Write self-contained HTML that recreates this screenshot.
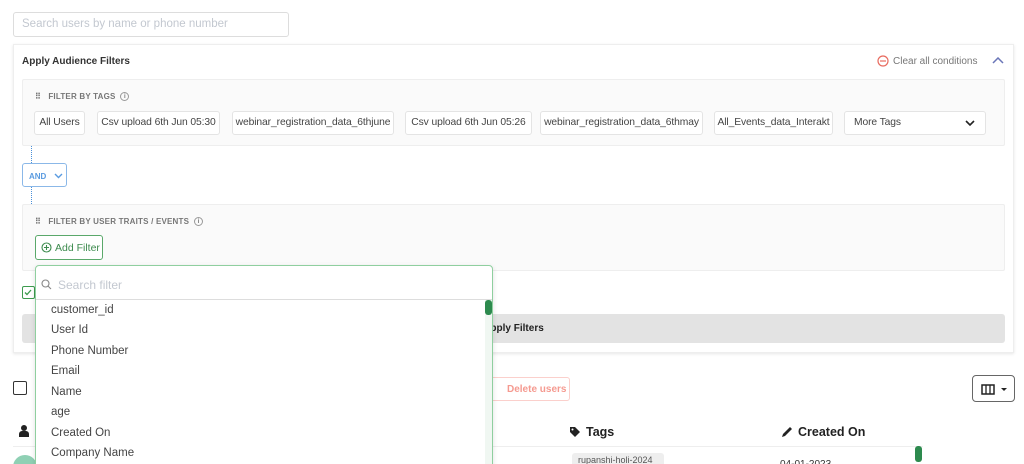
<!DOCTYPE html>
<html><head><meta charset="utf-8"><style>
*{box-sizing:border-box;margin:0;padding:0}
html,body{width:1024px;height:464px;overflow:hidden}
body{background:#fff;font-family:"Liberation Sans",sans-serif;position:relative;color:#333}
.a{position:absolute}
.chip{position:absolute;top:111px;height:24px;border:1px solid #e4e4e4;border-radius:3px;background:#fff;font-size:10.3px;color:#444;line-height:22px;text-align:center;white-space:nowrap;overflow:hidden;letter-spacing:-0.1px}
.lbl{font-size:8px;font-weight:bold;color:#777;letter-spacing:.2px}
.it{position:absolute;left:51px;font-size:11.5px;color:#444}
</style></head><body>
<div class="a" style="left:13px;top:12px;width:276px;height:25px;border:1px solid #ddd;border-radius:3px;font-size:11.5px;color:#c3c8d0;padding:5px 8px">Search users by name or phone number</div>
<div class="a" style="left:13px;top:44px;width:1001px;height:309px;border:1px solid #eee;box-shadow:0 1px 3px rgba(0,0,0,.1);background:#fff"></div>
<div class="a" style="left:22px;top:56px;font-size:10px;font-weight:bold;color:#333">Apply Audience Filters</div>
<svg class="a" style="left:877px;top:55px" width="12" height="12"><circle cx="6" cy="6" r="5" fill="none" stroke="#e86b5f" stroke-width="1.2"/><line x1="3" y1="6" x2="9" y2="6" stroke="#e86b5f" stroke-width="1.2"/></svg>
<div class="a" style="left:893px;top:56px;font-size:10px;color:#777">Clear all conditions</div>
<svg class="a" style="left:992px;top:57px" width="12" height="8"><path d="M1 6L6 1L11 6" fill="none" stroke="#6a76b8" stroke-width="1.5"/></svg>
<div class="a" style="left:22px;top:79px;width:983px;height:67px;border:1px solid #eee;background:#fafafa;border-radius:2px"></div>
<div class="a lbl" style="left:35px;top:92px">⠿&nbsp;&nbsp;&nbsp;FILTER BY TAGS&nbsp;&nbsp;<span style="display:inline-block;width:9px;height:9px;border:1px solid #999;border-radius:50%;font-size:6px;text-align:center;line-height:8px;vertical-align:middle">i</span></div>
<div class="chip" style="left:34px;width:51px">All Users</div>
<div class="chip" style="left:97px;width:123px">Csv upload 6th Jun 05:30</div>
<div class="chip" style="left:232px;width:162px">webinar_registration_data_6thjune</div>
<div class="chip" style="left:405px;width:127px">Csv upload 6th Jun 05:26</div>
<div class="chip" style="left:540px;width:163px">webinar_registration_data_6thmay</div>
<div class="chip" style="left:714px;width:119px">All_Events_data_Interakt</div>
<div class="chip" style="left:844px;width:142px;padding-left:9px;text-align:left">More Tags<svg style="position:absolute;right:10px;top:8px" width="10" height="7"><path d="M1 1L5 5L9 1" fill="none" stroke="#222" stroke-width="1.6"/></svg></div>
<div class="a" style="left:31px;top:146px;height:17px;border-left:1px dotted #4a90d9"></div>
<div class="a" style="left:22px;top:163px;width:45px;height:24px;border:1px solid #8bb8e8;border-radius:3px;font-size:8px;font-weight:bold;color:#5a9be0;padding:8px 0 0 6px">AND<svg style="position:absolute;left:31px;top:9px" width="9" height="6"><path d="M1 1L4.5 4.5L8 1" fill="none" stroke="#5a9be0" stroke-width="1.4"/></svg></div>
<div class="a" style="left:31px;top:187px;height:17px;border-left:1px dotted #4a90d9"></div>
<div class="a" style="left:22px;top:204px;width:983px;height:67px;border:1px solid #eee;background:#fafafa;border-radius:2px"></div>
<div class="a lbl" style="left:35px;top:217px">⠿&nbsp;&nbsp;&nbsp;FILTER BY USER TRAITS / EVENTS&nbsp;&nbsp;<span style="display:inline-block;width:9px;height:9px;border:1px solid #999;border-radius:50%;font-size:6px;text-align:center;line-height:8px;vertical-align:middle">i</span></div>
<div class="a" style="left:35px;top:235px;width:68px;height:25px;border:1px solid #5aa86a;border-radius:3px;background:#fff;font-size:10.5px;color:#3d8b4e;padding:6px 0 0 19px">Add Filter<svg style="position:absolute;left:5px;top:6px" width="11" height="11"><circle cx="5.5" cy="5.5" r="4.5" fill="none" stroke="#3d8b4e" stroke-width="1.1"/><path d="M5.5 3v5M3 5.5h5" stroke="#3d8b4e" stroke-width="1.1"/></svg></div>
<div class="a" style="left:22px;top:286px;width:13px;height:13px;border:1.5px solid #3d9b4e;border-radius:2px"><svg style="position:absolute;left:1px;top:2px" width="8" height="7"><path d="M1 3.5L3 5.5L7 1" fill="none" stroke="#3d9b4e" stroke-width="1.3"/></svg></div>
<div class="a" style="left:22px;top:314px;width:983px;height:29px;background:#e3e3e3;border-radius:3px;font-size:10px;font-weight:bold;color:#222;text-align:center;line-height:29px">Apply Filters</div>
<div class="a" style="left:13px;top:381px;width:14px;height:14px;border:1.5px solid #333;border-radius:2px"></div>
<div class="a" style="left:485px;top:377px;width:85px;height:24px;border:1px solid #fbd0cc;border-radius:3px;font-size:10px;font-weight:bold;color:#f59a90;padding:6px 0 0 21px">Delete users</div>
<div class="a" style="left:972px;top:375px;width:43px;height:27px;border:1px solid #666;border-radius:4px"><svg style="position:absolute;left:8px;top:8px" width="28" height="11"><rect x="1" y="1" width="12" height="9" fill="none" stroke="#222" stroke-width="1.5"/><path d="M5 1v9M9 1v9" stroke="#222" stroke-width="1.3"/><path d="M20 4h6l-3 3z" fill="#222"/></svg></div>
<svg class="a" style="left:19px;top:425px" width="10" height="12"><circle cx="5" cy="3" r="3" fill="#222"/><path d="M0 12v-3a3 3 0 0 1 3-3h4a3 3 0 0 1 3 3v3z" fill="#222"/></svg>
<svg class="a" style="left:569px;top:426px" width="12" height="11"><path d="M1 1h5l5 5-5 5-5-5z" fill="#222"/><circle cx="3.5" cy="3.5" r="1" fill="#fff"/></svg>
<div class="a" style="left:586px;top:425px;font-size:12.5px;font-weight:bold;color:#222">Tags</div>
<svg class="a" style="left:781px;top:426px" width="12" height="12"><path d="M1 11l1-3 7-7 2 2-7 7z" fill="#222"/></svg>
<div class="a" style="left:798px;top:425px;font-size:12.5px;font-weight:bold;color:#222">Created On</div>
<div class="a" style="left:13px;top:446px;width:910px;border-top:1px solid #eee"></div>
<div class="a" style="left:572px;top:453px;width:92px;height:14px;background:#eee;border-radius:3px;font-size:9px;color:#555;padding:2px 0 0 6px">rupanshi-holi-2024</div>
<div class="a" style="left:780px;top:459px;font-size:10px;color:#333">04-01-2023</div>
<div class="a" style="left:915px;top:446px;width:7px;height:16px;background:#2d8a4e;border-radius:3px"></div>
<div class="a" style="left:13px;top:455px;width:24px;height:24px;border-radius:50%;background:#8fd0b4"></div>
<div class="a" style="left:35px;top:265px;width:458px;height:210px;border:1px solid #8fcf9f;border-radius:4px;background:#fff;box-shadow:0 2px 6px rgba(0,0,0,.12)"></div>
<svg class="a" style="left:41px;top:279px" width="11" height="11"><circle cx="4.5" cy="4.5" r="3.5" fill="none" stroke="#888" stroke-width="1.1"/><path d="M7 7l3 3" stroke="#888" stroke-width="1.1"/></svg>
<div class="a" style="left:58px;top:278px;font-size:12px;color:#c3c8d0">Search filter</div>
<div class="a" style="left:36px;top:299px;width:456px;border-top:1px solid #ddd"></div>
<div class="a" style="left:485px;top:300px;width:7px;height:164px;background:#f0f7f2"></div>
<div class="a" style="left:485px;top:300px;width:7px;height:15px;background:#2d8a4e;border-radius:3px"></div>
<div class="it" style="top:304px">customer_id</div>
<div class="it" style="top:324px">User Id</div>
<div class="it" style="top:345px">Phone Number</div>
<div class="it" style="top:365px">Email</div>
<div class="it" style="top:386px">Name</div>
<div class="it" style="top:406px">age</div>
<div class="it" style="top:427px">Created On</div>
<div class="it" style="top:447px">Company Name</div>
</body></html>
